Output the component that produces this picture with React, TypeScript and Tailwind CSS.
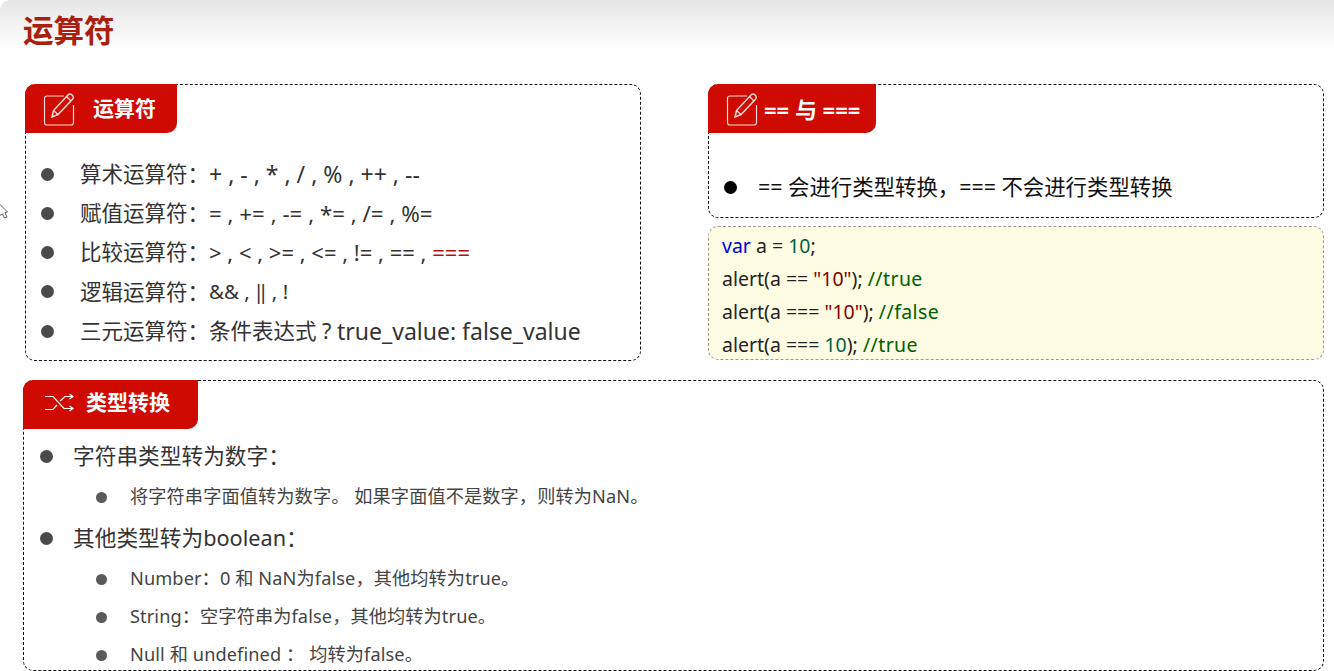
const font = "font-['Noto_Sans','Noto_Sans_CJK_SC',sans-serif]";

function EditIcon() {
  return (
    <svg width="32" height="34" viewBox="0 0 32 34" fill="none" stroke="white" strokeOpacity="0.85" className="shrink-0">
      <path d="M21 4H4a2.500 2.500 0 0 0-2.500 2.500v24A2.500 2.500 0 0 0 4 33h24a2.500 2.500 0 0 0 2.500-2.500V13" strokeWidth="1.200" />
      <path d="M9 25l1.500-6.500L25 3c1-1 3-1 4.300.2s1.200 3 .2 4L15 22.500z" strokeWidth="1.500" />
      <path d="M10.500 18.500l4.500 4M23.500 4.500l4.500 4.500" strokeWidth="1.300" />
    </svg>
  );
}

function ShuffleIcon() {
  return (
    <svg width="30" height="18" viewBox="0 0 30 18" fill="none" stroke="white" strokeWidth="1.200" className="shrink-0">
      <path d="M1 2.500h8L20 14.500h8.500" />
      <path d="M1 15.500h8l4-4.500M16 7l5-4.500h7.500" />
      <path d="M25.500 0l3.500 2.500-3.500 2.500M25.500 12l3.500 2.500-3.500 2.500" />
    </svg>
  );
}

function Cursor() {
  return (
    <svg width="9" height="16" viewBox="0 0 9 16" fill="white" stroke="#333" strokeWidth="0.800" className="absolute left-0 top-[203px]">
      <path d="M-1 0.500L7.500 9 5 9.500 7 14 4.500 15 2.500 11-1 13z" />
    </svg>
  );
}

function Tab({ icon, title, className, titleClass = "text-[21px]" }: { icon: React.ReactNode; title: string; className: string; titleClass?: string }) {
  return (
    <div className={`flex h-[49px] items-center rounded-tl-[10px] rounded-br-[10px] bg-[#cf0a00] font-bold text-white ${className}`}>
      {icon}
      <span className={`leading-none ${titleClass}`}>{title}</span>
    </div>
  );
}

function Item({ children, gap = "gap-[26px]", dot = "size-[13px] bg-[#4a4a4a]", className = "" }: { children: React.ReactNode; gap?: string; dot?: string; className?: string }) {
  return (
    <li className={`flex items-center ${gap} ${className}`}>
      <span className={`shrink-0 rounded-full ${dot}`} />
      <span className="whitespace-nowrap">{children}</span>
    </li>
  );
}

function Sub({ children }: { children: React.ReactNode }) {
  return (
    <li className="flex h-[38px] items-center gap-[23px] pl-[56px] text-[18.200px] tracking-[0.1px] text-[#444]">
      <span className="size-[11px] shrink-0 rounded-full bg-[#5a5a5a]" />
      <span className="whitespace-nowrap">{children}</span>
    </li>
  );
}

export default function App() {
  return (
    <div className={`relative h-[671px] w-[1334px] overflow-hidden bg-white ${font}`}>
      <Cursor />
      <header className="h-[50px] rounded-tl-[10px] bg-gradient-to-b from-[#e6e6e6] to-white pl-[23px] pt-[10px]">
        <h1 className="text-[30.500px] leading-[40px] font-bold text-[#a92010]">运算符</h1>
      </header>

      <div className="mt-[34px] flex gap-[67px] pl-[25px] pr-[10px]">
        <section className="h-[277px] w-[616px] rounded-[10px] border border-dashed border-[#111]">
          <Tab icon={<div className="mr-[18px]"><EditIcon /></div>} title="运算符" className="-ml-px -mt-px w-[152px] pl-[18px]" />
          <ul className="mt-[22px] flex flex-col gap-[1.250px] pl-[15px] text-[21.500px] text-[#333]">
            <Item><span className="flex h-[38px] items-center">算术运算符：<span className="text-[23px]">+ , - , * , / , % , ++ , --</span></span></Item>
            <Item><span className="flex h-[38px] items-center">赋值运算符：<span className="text-[22.300px]">= , += , -= , *= , /= , %=</span></span></Item>
            <Item><span className="flex h-[38px] items-center">比较运算符：<span className="text-[22px]">&gt; , &lt; , &gt;= , &lt;= , != , == ,&nbsp;<span className="text-[#b01010]">===</span></span></span></Item>
            <Item><span className="flex h-[38px] items-center">逻辑运算符：<span className="text-[20.500px]">&amp;&amp; , ‖ , !</span></span></Item>
            <Item><span className="flex h-[38px] items-center">三元运算符：条件表达式 ?&nbsp;<span className="text-[23px]">true_value: false_value</span></span></Item>
          </ul>
        </section>

        <div className="flex w-[616px] flex-col gap-[8px]">
          <section className="h-[134px] rounded-[10px] border border-dashed border-[#111]">
            <Tab icon={<div className="mr-[6px]"><EditIcon /></div>} title="== 与 ===" titleClass="text-[22px]" className="-ml-px -mt-px w-[168px] pl-[18px]" />
            <ul className="mt-[38px] pl-[15px] text-[21.400px] text-[#111]">
              <Item gap="gap-[21px]" dot="size-[13px] bg-black">== 会进行类型转换，=== 不会进行类型转换</Item>
            </ul>
          </section>
          <pre className={`h-[134px] rounded-[10px] border border-dashed border-[#999] bg-[#fefde3] pl-[13px] pt-[1.500px] text-[19.500px] leading-[33.300px] text-[#222] ${font}`}>
            <div><span className="text-[#0000dd]">var</span> a = <span className="text-[#006040]">10</span>;</div>
            <div>alert(a == <span className="text-[#800000]">"10"</span>); <span className="tracking-[0.4px] text-[#006000]">//true</span></div>
            <div>alert(a === <span className="text-[#800000]">"10"</span>); <span className="tracking-[0.4px] text-[#006000]">//false</span></div>
            <div>alert(a === <span className="text-[#006040]">10</span>); <span className="tracking-[0.4px] text-[#006000]">//true</span></div>
          </pre>
        </div>
      </div>

      <section className="ml-[23px] mt-[19px] h-[291px] w-[1301px] rounded-[10px] border border-dashed border-[#111]">
        <Tab icon={<div className="mr-[12px]"><ShuffleIcon /></div>} title="类型转换" className="-ml-px -mt-px w-[175px] pl-[21px] pb-[4px]" />
        <ul className="mt-[5px] pl-[16px] text-[21.700px] text-[#333]">
          <Item gap="gap-[20px]" className="h-[44px]">字符串类型转为数字：</Item>
          <Sub>将字符串字面值转为数字。 如果字面值不是数字，则转为NaN。</Sub>
          <Item gap="gap-[20px]" className="h-[44px]">其他类型转为boolean：</Item>
          <Sub>Number：0 和 NaN为false，其他均转为true。</Sub>
          <Sub>String：空字符串为false，其他均转为true。</Sub>
          <Sub>Null 和 undefined ： 均转为false。</Sub>
        </ul>
      </section>
    </div>
  );
}
